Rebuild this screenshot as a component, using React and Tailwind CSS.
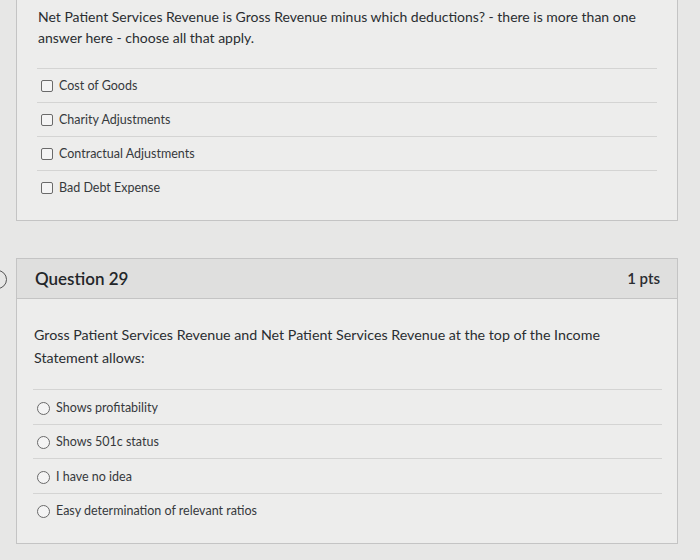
const lato = { fontFamily: "Lato, 'Open Sans', sans-serif" };

const checkOptions = [
  "Cost of Goods",
  "Charity Adjustments",
  "Contractual Adjustments",
  "Bad Debt Expense",
];

const radioOptions = [
  "Shows profitability",
  "Shows 501c status",
  "I have no idea",
  "Easy determination of relevant ratios",
];

export default function App() {
  return (
    <div
      className="relative w-[700px] h-[560px] overflow-hidden bg-[#e7e7e6] text-[#2c2f33]"
      style={lato}
    >
      {/* previous question (cut off at top) */}
      <div className="ml-[16px] w-[662px] border-x border-b border-[#c4c4c4] bg-[#ededec] pb-[16px]">
        <p className="pl-[21px] pr-[30px] pt-[6px] text-[14px] leading-[21px] text-[#2a2d31]">
          Net Patient Services Revenue is Gross Revenue minus which deductions? - there is more than one
          answer here - choose all that apply.
        </p>
        <div className="mt-[20px] ml-[20px] mr-[20px]">
          {checkOptions.map((opt) => (
            <div
              key={opt}
              className="flex h-[34px] items-center gap-[6px] border-t border-[#d4d4d3] pl-[4px] pt-[1px]"
            >
              <span className="h-[12px] w-[12px] rounded-[2px] border-[1.5px] border-[#6a6a6a] bg-[#f4f4f4]" />
              <span className="text-[12.5px] text-[#36393c]">{opt}</span>
            </div>
          ))}
        </div>
      </div>

      {/* question 29 */}
      <div className="mt-[37px] ml-[16px] w-[662px] border border-[#c4c4c4] bg-[#ededec]">
        <div className="flex h-[40px] items-center justify-between border-b border-[#c4c4c4] bg-[#dfdfde] pl-[18px] pr-[17px]">
          <span className="text-[17px] font-semibold text-[#232629]">Question 29</span>
          <span className="text-[15px] font-semibold text-[#2a2d31]">1 pts</span>
        </div>
        <div className="pb-[16px]">
          <p className="pl-[17px] pr-[60px] pt-[24px] text-[14.25px] leading-[23px] text-[#2a2d31]">
            Gross Patient Services Revenue and Net Patient Services Revenue at the top of the Income
            Statement allows:
          </p>
          <div className="mt-[20px] ml-[16px] mr-[15px]">
            {radioOptions.map((opt) => (
              <div
                key={opt}
                className="flex h-[34.5px] items-center gap-[6px] border-t border-[#d4d4d3] pl-[4px] pt-[3px]"
              >
                <span className="h-[13px] w-[13px] rounded-full border-[1.5px] border-[#6a6a6a] bg-[#f4f4f4]" />
                <span className="text-[12.5px] text-[#36393c]">{opt}</span>
              </div>
            ))}
          </div>
        </div>
      </div>

      {/* flag icon, cut off at left edge */}
      <div className="absolute left-[-12px] top-[270px] h-[19px] w-[19px] rounded-full border-[1.5px] border-[#555]" />
    </div>
  );
}
